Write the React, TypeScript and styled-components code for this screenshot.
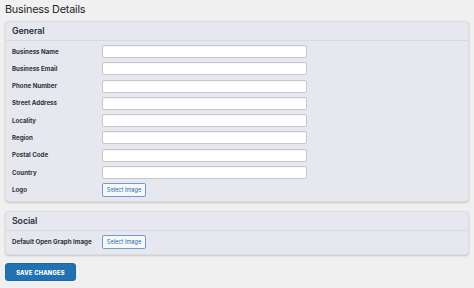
import { styled, createGlobalStyle } from "styled-components";

const GlobalStyle = createGlobalStyle`
  html, body {
    margin: 0;
    padding: 0;
    background: #f0f0f1;
  }
  body {
    font-family: Inter, "Noto Sans", "Liberation Sans", sans-serif;
    color: #1d2327;
  }
`;

const generalFields = [
  "Business Name",
  "Business Email",
  "Phone Number",
  "Street Address",
  "Locality",
  "Region",
  "Postal Code",
  "Country",
];

function App() {
  return (
    <>
      <GlobalStyle />
      <Page>
        <Title>Business Details</Title>
        <Card>
          <CardHeader>General</CardHeader>
          <CardBody>
            {generalFields.map((label) => (
              <Row key={label}>
                <Label>{label}</Label>
                <Input type="text" />
              </Row>
            ))}
            <Row>
              <Label>Logo</Label>
              <SelectButton type="button">Select Image</SelectButton>
            </Row>
          </CardBody>
        </Card>
        <Card $spaced>
          <CardHeader>Social</CardHeader>
          <CardBody $tight>
            <Row>
              <Label>Default Open Graph Image</Label>
              <SelectButton type="button">Select Image</SelectButton>
            </Row>
          </CardBody>
        </Card>
        <SaveButton type="button">Save Changes</SaveButton>
      </Page>
    </>
  );
}

const Page = styled.div`
  width: 474px;
  height: 288px;
  box-sizing: border-box;
  padding: 0 5px;
  display: flex;
  flex-direction: column;
  align-items: stretch;
`;

const Title = styled.h1`
  margin: 0;
  height: 21px;
  line-height: 20px;
  font-size: 10.8px;
  font-weight: 400;
  letter-spacing: -0.2px;
  color: #1d2327;
`;

const Card = styled.section<{ $spaced?: boolean }>`
  margin-top: ${({ $spaced }) => ($spaced ? "9px" : "0")};
  background: #e6e7ef;
  border: 1px solid #dcdde3;
  border-radius: 4px;
  box-shadow: 0 1px 2px rgba(0, 0, 0, 0.18);
`;

const CardHeader = styled.h2`
  margin: 0;
  height: 18px;
  line-height: 18px;
  padding: 0 6px;
  font-size: 8.8px;
  font-weight: 600;
  letter-spacing: -0.1px;
  color: #2c3338;
  border-bottom: 1px solid #d8d9e1;
`;

const CardBody = styled.div<{ $tight?: boolean }>`
  display: flex;
  flex-direction: column;
  gap: 4.3px;
  padding: ${({ $tight }) => ($tight ? "4px 6px 5px" : "4px 6px 4px")};
`;

const Row = styled.div`
  display: grid;
  grid-template-columns: 90px 205px;
  align-items: center;
  height: 13px;

  &:last-child {
    height: 14px;
  }
`;

const Label = styled.label`
  font-size: 6.2px;
  line-height: 8px;
  font-weight: 700;
  color: #2c3338;
  white-space: nowrap;
`;

const Input = styled.input`
  box-sizing: border-box;
  width: 205px;
  height: 13px;
  margin: 0;
  padding: 0 3px;
  background: #ffffff;
  border: 1px solid #c7c8cc;
  border-radius: 2px;
  box-shadow: inset 0 1px 1px rgba(0, 0, 0, 0.04);
`;

const SelectButton = styled.button`
  box-sizing: border-box;
  width: 44px;
  height: 14px;
  margin: 0;
  padding: 0;
  background: #f6f7f7;
  border: 1px solid #6f9dc6;
  border-radius: 2px;
  color: #2271b1;
  font-family: inherit;
  font-size: 5.6px;
  line-height: 12px;
  cursor: pointer;
`;

const SaveButton = styled.button`
  box-sizing: border-box;
  align-self: flex-start;
  margin-top: 8px;
  width: 71px;
  height: 18px;
  padding: 0;
  background: #2271b1;
  border: 1px solid #1f68a5;
  border-radius: 3px;
  color: #ffffff;
  font-family: inherit;
  font-size: 5.8px;
  font-weight: 800;
  letter-spacing: 0.2px;
  text-transform: uppercase;
  cursor: pointer;
`;

export default App;
